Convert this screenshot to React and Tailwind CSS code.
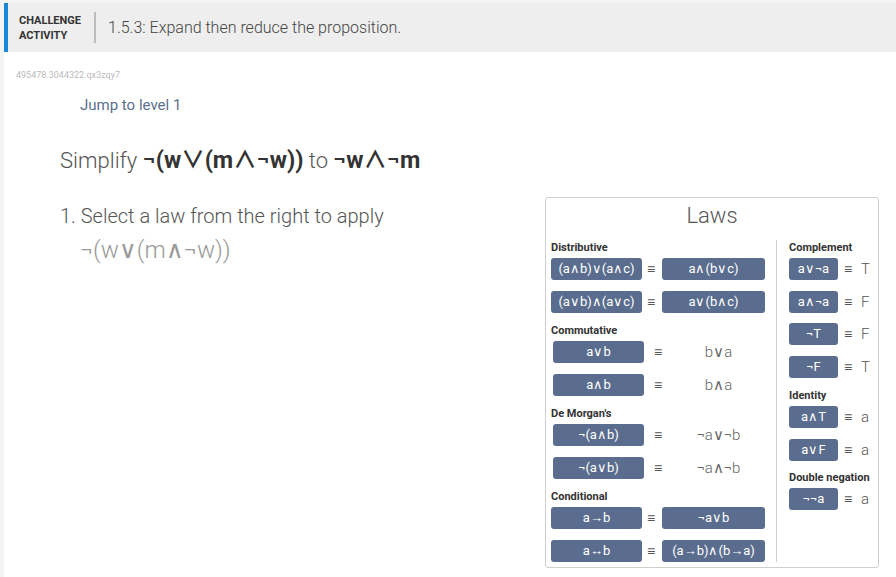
import React from "react";

const Btn = ({ children, className = "" }) => (
  <div
    className={
      "h-[22px] rounded-[3px] bg-[#5a6d8e] text-white text-[13px] leading-[22px] text-center whitespace-nowrap " +
      className
    }
  >
    {children}
  </div>
);

const Eq = ({ className = "" }) => (
  <div className={"text-[14px] leading-[22px] text-[#555] text-center " + className}>≡</div>
);

const Label = ({ children, className = "" }) => (
  <div className={"text-[11px] font-bold leading-[13px] text-[#333] mb-[4px] " + className}>{children}</div>
);

const RowBB = ({ a, b }) => (
  <div className="flex items-center">
    <Btn className="w-[91px]">{a}</Btn>
    <Eq className="w-[20px] pr-[2px]" />
    <Btn className="w-[103px]">{b}</Btn>
  </div>
);

const RowBT = ({ a, b }) => (
  <div className="flex items-center">
    <Btn className="w-[91px] ml-[2px]">{a}</Btn>
    <Eq className="w-[28px]" />
    <div className="w-[93px] text-center text-[15px] leading-[22px] text-[#666] font-light">{b}</div>
  </div>
);

const RowR = ({ a, b }) => (
  <div className="flex items-center">
    <Btn className="w-[49px]">{a}</Btn>
    <Eq className="w-[18px] pl-[2px]" />
    <div className="pl-[5px] text-[15px] leading-[22px] text-[#555] font-light">{b}</div>
  </div>
);

export default function App() {
  return (
    <div className="min-h-screen bg-[#f3f3f3] pl-[4px] pt-[3px] font-['Roboto','Liberation_Sans',sans-serif]">
      <div className="bg-white min-h-[574px]">
        <header className="h-[49px] bg-[#eeeeee] border-l-4 border-[#1787d6] flex items-center">
          <div className="pl-[11px] w-[86px] text-[11px] font-bold leading-[15px] text-[#333] uppercase">
            Challenge
            <br />
            Activity
          </div>
          <div className="w-[2px] h-[31px] bg-[#bdbdbd]" />
          <div className="ml-[12px] text-[16px] font-light text-[#444]">1.5.3: Expand then reduce the proposition.</div>
        </header>

        <div className="pl-[12px] pt-[17px] text-[9px] leading-[12px] text-[#bbb]">495478.3044322.qx3zqy7</div>

        <div className="pl-[76px] mt-[14px] text-[15px] leading-[20px] text-[#5b6f8c]">Jump to level 1</div>

        <div className="pl-[56px] mt-[30px] h-[30px] text-[22px] leading-[30px] text-[#555] font-light whitespace-nowrap">
          Simplify{" "}
          <span className="text-[23.5px] font-bold text-[#333] font-['Roboto','Noto_Sans_CJK_SC',sans-serif]">¬(w∨(m∧¬w))</span> to{" "}
          <span className="text-[23.5px] font-bold text-[#333] font-['Roboto','Noto_Sans_CJK_SC',sans-serif]">¬w∧¬m</span>
        </div>

        <div className="pl-[56px] mt-[22px] flex">
          <div className="w-[485px] pt-[6px]">
            <div className="text-[20px] leading-[26px] text-[#555] font-light">
              1. Select a law from the right to apply
            </div>
            <div className="pl-[20px] mt-[5px] text-[24px] leading-[32px] text-[#999] font-light">
              ¬(w∨(m∧¬w))
            </div>
          </div>

          <div className="w-[334px] h-[371px] border border-[#cfcfcf] rounded-[3px]">
            <div className="pt-[4px] text-center text-[22px] leading-[28px] text-[#555] font-light">Laws</div>
            <div className="mt-[10px] flex">
              <div className="pl-[5px] w-[231px] border-r border-[#cfcfcf] h-[322px] pt-[1px]">
                <Label>Distributive</Label>
                <div className="flex flex-col gap-[11px]">
                  <RowBB a="(a∧b)∨(a∧c)" b="a∧(b∨c)" />
                  <RowBB a="(a∨b)∧(a∨c)" b="a∨(b∧c)" />
                </div>
                <Label className="mt-[11px]">Commutative</Label>
                <div className="flex flex-col gap-[11px]">
                  <RowBT a="a∨b" b="b∨a" />
                  <RowBT a="a∧b" b="b∧a" />
                </div>
                <Label className="mt-[11px]">De Morgan's</Label>
                <div className="flex flex-col gap-[11px]">
                  <RowBT a="¬(a∧b)" b="¬a∨¬b" />
                  <RowBT a="¬(a∨b)" b="¬a∧¬b" />
                </div>
                <Label className="mt-[11px]">Conditional</Label>
                <div className="flex flex-col gap-[11px]">
                  <RowBB a="a→b" b="¬a∨b" />
                  <RowBB a="a↔b" b="(a→b)∧(b→a)" />
                </div>
              </div>
              <div className="pl-[12px] pt-[1px]">
                <Label>Complement</Label>
                <div className="flex flex-col gap-[10.5px]">
                  <RowR a="a∨¬a" b="T" />
                  <RowR a="a∧¬a" b="F" />
                  <RowR a="¬T" b="F" />
                  <RowR a="¬F" b="T" />
                </div>
                <Label className="mt-[11px]">Identity</Label>
                <div className="flex flex-col gap-[11px]">
                  <RowR a="a∧T" b="a" />
                  <RowR a="a∨F" b="a" />
                </div>
                <Label className="mt-[10px]">Double negation</Label>
                <RowR a="¬¬a" b="a" />
              </div>
            </div>
          </div>
        </div>
      </div>
    </div>
  );
}
